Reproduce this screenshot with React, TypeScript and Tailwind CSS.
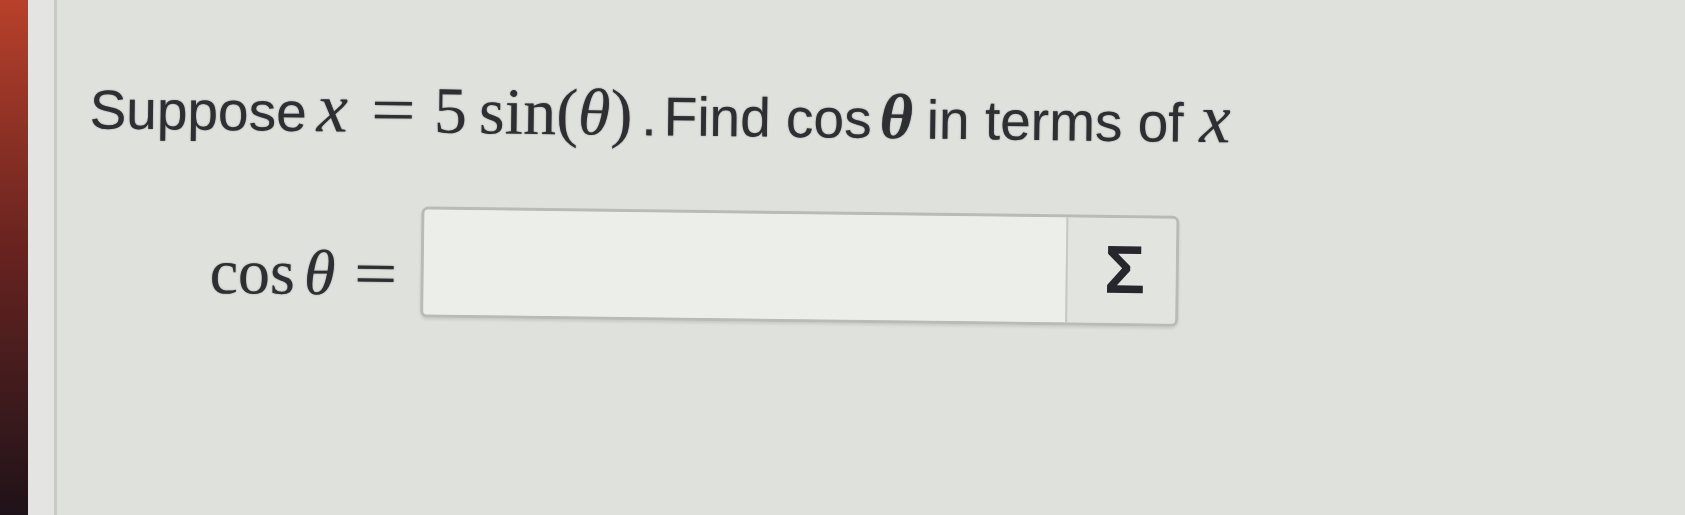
import React from 'react';

const sans = "font-['Liberation_Sans',Arial,sans-serif]";
const serif = "font-['Liberation_Serif','Times_New_Roman',serif]";

function M({ children, className = '' }: { children: React.ReactNode; className?: string }) {
  return <span className={`${serif} ${className}`}>{children}</span>;
}

// the TeX equals sign is wider than the Times one
function Eq({ size, className = '' }: { size: string; className?: string }) {
  return <span className={`${serif} ${size} inline-block scale-x-[1.2] ${className}`}>=</span>;
}

export default function App() {
  return (
    <div className="flex h-[515px] w-full overflow-hidden bg-[#dfe1dd]">
      {/* edge of the window behind */}
      <div className="w-[28px] shrink-0 bg-gradient-to-b from-[#b8412a] via-[#66221f] to-[#1f1218]" />
      <div className="w-[29px] shrink-0 border-r-[3px] border-[#c8cac6] bg-[#e4e5e2]" />

      <div className="flex-1 origin-top-left rotate-[0.7deg] pl-[34px] pt-[70px] text-[#2e2e33] [text-shadow:0_0_1.5px_rgba(40,40,46,0.55)]">
        {/* question */}
        <div className="flex items-baseline leading-none whitespace-nowrap">
          <span className={`${sans} text-[55px]`}>Suppose</span>
          <M className="ml-[10px] text-[70px] italic">x</M>
          <Eq size="text-[66px]" className="ml-[27px]" />
          <M className="ml-[22px] text-[66px]">5</M>
          <M className="ml-[12px] text-[66px]">sin</M>
          <M className="text-[66px]">(</M>
          <M className="text-[66px] italic">θ</M>
          <M className="text-[66px]">)</M>
          <span className={`${sans} ml-[9px] text-[55px]`}>.</span>
          <span className={`${sans} ml-[7px] text-[55px]`}>Find cos</span>
          <M className="ml-[8px] text-[64px] font-bold italic">θ</M>
          <span className={`${sans} ml-[14px] text-[55px]`}>in terms of</span>
          <M className="ml-[16px] text-[70px] italic">x</M>
        </div>

        {/* answer row */}
        <div className="mt-[62px] flex items-start">
          <div className="ml-[122px] mt-[36px] flex items-baseline leading-none">
            <M className="text-[64px]">cos</M>
            <M className="ml-[9px] text-[64px] italic">θ</M>
            <Eq size="text-[64px]" className="ml-[22px]" />
          </div>
          <div className="ml-[27px] flex h-[111px] w-[758px] overflow-hidden rounded-[7px] border-[3px] border-[#b9bbb7] shadow-[0_2px_3px_rgba(0,0,0,0.1)]">
            <div className="flex-1 bg-[#eceeea]" />
            <button className="flex w-[110px] items-center justify-center border-l-[2px] border-[#c6c8c4] bg-[#e2e4e0] pb-[4px] pl-[6px]">
              <span className={`${sans} text-[68px] font-bold leading-none text-[#26262c]`}>Σ</span>
            </button>
          </div>
        </div>
      </div>
    </div>
  );
}
